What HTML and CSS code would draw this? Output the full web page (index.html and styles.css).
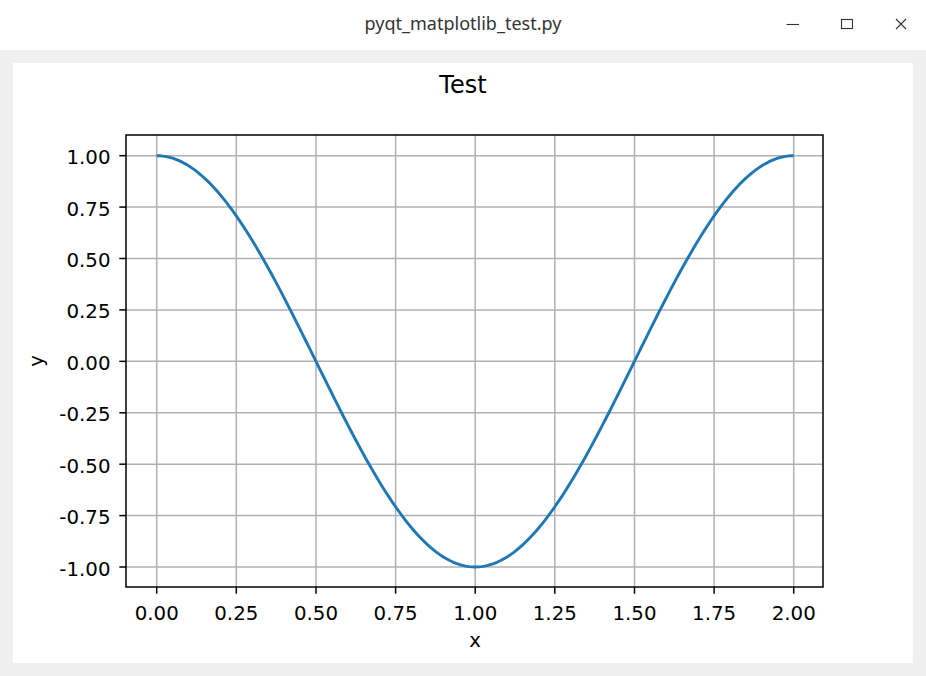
FILE: index.html
```html
<!DOCTYPE html>
<html lang="en">

<head>
    <meta charset="UTF-8">
    <title>pyqt_matplotlib_test.py</title>
    <link rel="stylesheet" href="styles.css">
</head>

<body>
    <div class="window">
        <div class="titlebar">
            <div></div>
            <span class="title">pyqt_matplotlib_test.py</span>
            <div class="controls">
                <span class="ctl">
                    <svg width="14" height="14" viewBox="0 0 14 14"><path d="M0.5 7.5H13" /></svg>
                </span>
                <span class="ctl">
                    <svg width="14" height="14" viewBox="0 0 14 14"><rect x="1.5" y="2.5" width="11" height="9" /></svg>
                </span>
                <span class="ctl">
                    <svg width="14" height="14" viewBox="0 0 14 14"><path d="M2 2L12 12M12 2L2 12" /></svg>
                </span>
            </div>
        </div>

        <div class="content">
            <div class="canvas">
                <svg class="figure" width="900" height="600" viewBox="0 0 900 600">
                    <!-- grid -->
                    <g class="grid">
                        <line x1="143.7" y1="72" x2="143.7" y2="524" />
                        <line x1="223.3" y1="72" x2="223.3" y2="524" />
                        <line x1="303.0" y1="72" x2="303.0" y2="524" />
                        <line x1="382.6" y1="72" x2="382.6" y2="524" />
                        <line x1="462.2" y1="72" x2="462.2" y2="524" />
                        <line x1="541.8" y1="72" x2="541.8" y2="524" />
                        <line x1="621.5" y1="72" x2="621.5" y2="524" />
                        <line x1="701.1" y1="72" x2="701.1" y2="524" />
                        <line x1="780.7" y1="72" x2="780.7" y2="524" />

                        <line x1="113" y1="92.7" x2="810" y2="92.7" />
                        <line x1="113" y1="144.1" x2="810" y2="144.1" />
                        <line x1="113" y1="195.5" x2="810" y2="195.5" />
                        <line x1="113" y1="246.9" x2="810" y2="246.9" />
                        <line x1="113" y1="298.35" x2="810" y2="298.35" />
                        <line x1="113" y1="349.8" x2="810" y2="349.8" />
                        <line x1="113" y1="401.2" x2="810" y2="401.2" />
                        <line x1="113" y1="452.6" x2="810" y2="452.6" />
                        <line x1="113" y1="504.0" x2="810" y2="504.0" />
                    </g>

                    <path id="curve" class="curve" d="" />

                    <!-- spines -->
                    <rect class="spine" x="113" y="72" width="697" height="452" />

                    <!-- ticks -->
                    <g class="ticks">
                        <line x1="143.7" y1="524" x2="143.7" y2="530.7" />
                        <line x1="223.3" y1="524" x2="223.3" y2="530.7" />
                        <line x1="303.0" y1="524" x2="303.0" y2="530.7" />
                        <line x1="382.6" y1="524" x2="382.6" y2="530.7" />
                        <line x1="462.2" y1="524" x2="462.2" y2="530.7" />
                        <line x1="541.8" y1="524" x2="541.8" y2="530.7" />
                        <line x1="621.5" y1="524" x2="621.5" y2="530.7" />
                        <line x1="701.1" y1="524" x2="701.1" y2="530.7" />
                        <line x1="780.7" y1="524" x2="780.7" y2="530.7" />

                        <line x1="106.3" y1="92.7" x2="113" y2="92.7" />
                        <line x1="106.3" y1="144.1" x2="113" y2="144.1" />
                        <line x1="106.3" y1="195.5" x2="113" y2="195.5" />
                        <line x1="106.3" y1="246.9" x2="113" y2="246.9" />
                        <line x1="106.3" y1="298.35" x2="113" y2="298.35" />
                        <line x1="106.3" y1="349.8" x2="113" y2="349.8" />
                        <line x1="106.3" y1="401.2" x2="113" y2="401.2" />
                        <line x1="106.3" y1="452.6" x2="113" y2="452.6" />
                        <line x1="106.3" y1="504.0" x2="113" y2="504.0" />
                    </g>

                    <!-- tick labels -->
                    <g class="tick-label xlabels">
                        <text x="143.7" y="556.5">0.00</text>
                        <text x="223.3" y="556.5">0.25</text>
                        <text x="303.0" y="556.5">0.50</text>
                        <text x="382.6" y="556.5">0.75</text>
                        <text x="462.2" y="556.5">1.00</text>
                        <text x="541.8" y="556.5">1.25</text>
                        <text x="621.5" y="556.5">1.50</text>
                        <text x="701.1" y="556.5">1.75</text>
                        <text x="780.7" y="556.5">2.00</text>
                    </g>
                    <g class="tick-label ylabels">
                        <text x="97.5" y="101.2">1.00</text>
                        <text x="97.5" y="152.6">0.75</text>
                        <text x="97.5" y="204">0.50</text>
                        <text x="97.5" y="255.4">0.25</text>
                        <text x="97.5" y="306.8">0.00</text>
                        <text x="97.5" y="358.3">-0.25</text>
                        <text x="97.5" y="409.7">-0.50</text>
                        <text x="97.5" y="461.1">-0.75</text>
                        <text x="97.5" y="512.5">-1.00</text>
                    </g>

                    <text class="plot-title" x="450" y="30.3">Test</text>
                    <text class="axis-label" x="462" y="583.5">x</text>
                    <text class="axis-label" transform="translate(30 298) rotate(-90)">y</text>
                </svg>
            </div>
        </div>
    </div>

    <script>
        // y = cos(pi * x) for x in [0, 2]
        const pts = [];
        for (let i = 0; i <= 200; i++) {
            const x = i / 100;
            const px = 143.7 + 318.5 * x;
            const py = 298.35 - 205.65 * Math.cos(Math.PI * x);
            pts.push((i ? 'L' : 'M') + px.toFixed(2) + ' ' + py.toFixed(2));
        }
        document.getElementById('curve').setAttribute('d', pts.join(''));
    </script>
</body>

</html>
```

FILE: styles.css
```css
body {
    margin: 0;
    background: #efefef;
    font-family: "Noto Sans", sans-serif;
}

.window {
    width: 926px;
    height: 676px;
    display: flex;
    flex-direction: column;
}

.titlebar {
    height: 50px;
    background: #fff;
    display: grid;
    grid-template-columns: 1fr auto 1fr;
    align-items: center;
}

.title {
    font-size: 18px;
    color: #333;
    padding-bottom: 4px;
}

.controls {
    display: flex;
    justify-content: flex-end;
    gap: 8px;
    padding-right: 2px;
}

.ctl {
    width: 46px;
    height: 30px;
    display: flex;
    justify-content: center;
    align-items: center;
    margin-bottom: 2px;
}

.ctl svg {
    display: block;
    fill: none;
    stroke: #333;
    stroke-width: 1.1;
}

.content {
    flex: 1;
    padding: 13px;
    background: #efefef;
}

.canvas {
    width: 900px;
    height: 600px;
    background: #fff;
}

.figure {
    display: block;
}

.grid line {
    stroke: #b0b0b0;
    stroke-width: 1.5;
}

.curve {
    fill: none;
    stroke: #1f77b4;
    stroke-width: 2.9;
    stroke-linejoin: round;
}

.spine {
    fill: none;
    stroke: #000;
    stroke-width: 1.5;
}

.ticks line {
    stroke: #000;
    stroke-width: 1.5;
}

.tick-label {
    font-family: "DejaVu Sans", sans-serif;
    font-size: 19.8px;
    fill: #000;
}

.xlabels text {
    text-anchor: middle;
}

.ylabels text {
    text-anchor: end;
}

.plot-title {
    font-family: "DejaVu Sans", sans-serif;
    font-size: 24px;
    text-anchor: middle;
}

.axis-label {
    font-family: "DejaVu Sans", sans-serif;
    font-size: 19.8px;
    text-anchor: middle;
}
```
